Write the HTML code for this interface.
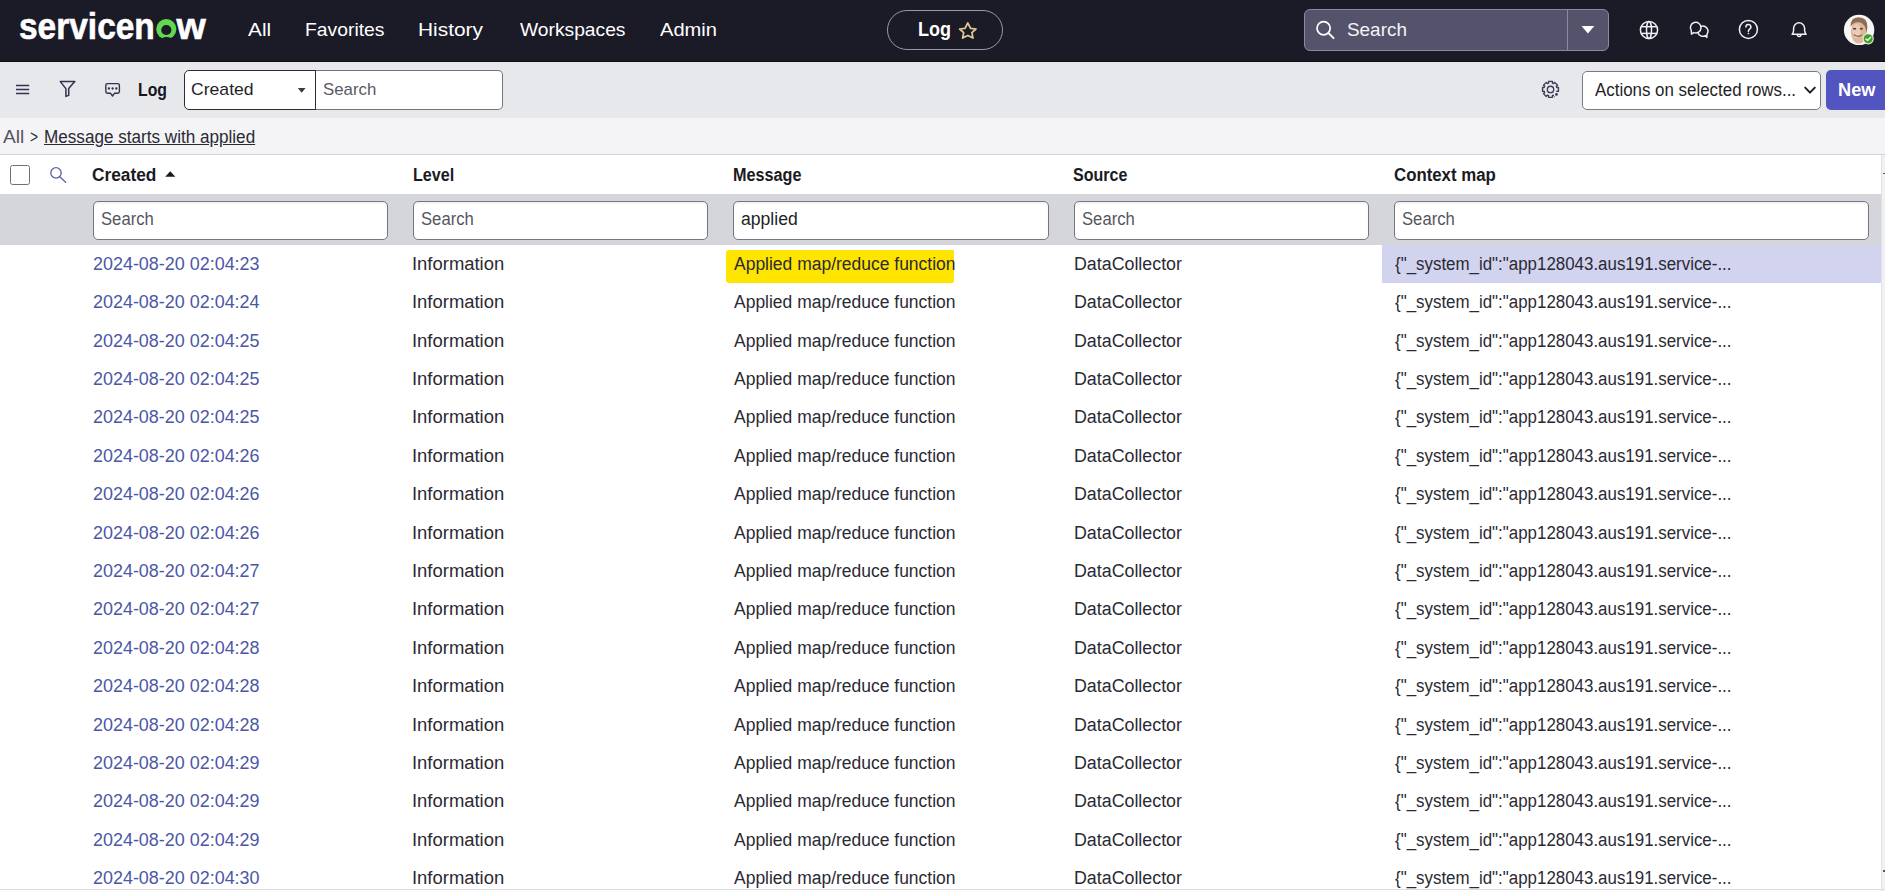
<!DOCTYPE html>
<html><head><meta charset="utf-8"><title>Log | ServiceNow</title>
<style>
html,body{margin:0;padding:0}
body{width:1885px;height:891px;overflow:hidden;position:relative;background:#fff;font-family:"Liberation Sans",sans-serif}
.r{position:absolute;box-sizing:border-box}
.t{position:absolute;white-space:pre;line-height:1;font-family:"Liberation Sans",sans-serif;transform-origin:0 0}
svg{position:absolute;overflow:visible}
</style></head><body>
<!-- nav -->
<div class="r" style="left:0;top:0;width:1885px;height:61px;background:#1b1a27"></div>
<div class="r" style="left:0;top:61px;width:1885px;height:1px;background:#0e0d16"></div>
<!-- toolbar -->
<div class="r" style="left:0;top:62px;width:1885px;height:56px;background:#e7e8ec"></div>
<!-- breadcrumb -->
<div class="r" style="left:0;top:118px;width:1885px;height:36px;background:#f4f4f7"></div>
<div class="r" style="left:0;top:154px;width:1885px;height:1px;background:#d4d4d8"></div>
<!-- filter row -->
<div class="r" style="left:0;top:194px;width:1881px;height:50.5px;background:#d5d6db"></div>
<!-- scrollbar track -->
<div class="r" style="left:1881px;top:155px;width:4px;height:736px;background:#f1f1f3;border-left:1px solid #e2e2e6"></div>
<div class="r" style="left:0;top:889px;width:1885px;height:1px;background:#dcdce0"></div>
<div class="r" style="left:1883px;top:172.5px;width:2px;height:1.6px;background:#555"></div>
<div class="r" style="left:1883px;top:870px;width:2px;height:1.6px;background:#555"></div>

<!-- logo -->
<svg style="left:0;top:0" width="240" height="62">
  <text x="19" y="38.6" font-family="Liberation Sans" font-weight="700" font-size="36" fill="#fff" stroke="#fff" stroke-width="0.6" textLength="135.8" lengthAdjust="spacingAndGlyphs">servicen</text>
  <circle cx="166.3" cy="29.1" r="10.1" fill="#62d84e"/>
  <circle cx="166.3" cy="30" r="5.1" fill="#1b1a27"/>
  <ellipse cx="166.6" cy="40.6" rx="6.4" ry="3.5" fill="#1b1a27"/>
  <text x="176.6" y="38.6" font-family="Liberation Sans" font-weight="700" font-size="36" fill="#fff" stroke="#fff" stroke-width="0.6" textLength="29.3" lengthAdjust="spacingAndGlyphs">w</text>
</svg>

<!-- Log pill -->
<div class="r" style="left:887px;top:10px;width:116px;height:40px;border:1.3px solid #9a98a8;border-radius:20px"></div>
<svg style="left:0;top:0" width="1" height="1">
  <path d="M967.8 23 L970.6 28.4 L976 29 L971.9 32.7 L973 38.1 L967.8 35.5 L962.6 38.1 L963.7 32.7 L959.6 29 L965 28.4 Z" fill="none" stroke="#e3cb94" stroke-width="1.7" stroke-linejoin="round"/>
</svg>

<!-- nav search -->
<div class="r" style="left:1304px;top:9px;width:305px;height:42px;background:#55526b;border:1.3px solid #8d8aa0;border-radius:6px"></div>
<div class="r" style="left:1567px;top:10px;width:1.2px;height:40px;background:#8d8aa0"></div>
<svg style="left:0;top:0" width="1" height="1">
  <circle cx="1323.6" cy="28.2" r="6.6" fill="none" stroke="#fff" stroke-width="1.7"/>
  <line x1="1328.4" y1="33" x2="1333.6" y2="38.2" stroke="#fff" stroke-width="1.8" stroke-linecap="round"/>
  <path d="M1581.5 26 L1594.3 26 L1587.9 33.6 Z" fill="#fff"/>
</svg>

<!-- nav icons -->
<svg style="left:0;top:0" width="1" height="1" fill="none" stroke="#f0f0f5" stroke-width="1.5">
  <!-- globe -->
  <circle cx="1649" cy="30" r="8.6"/>
  <ellipse cx="1649" cy="30" rx="2.5" ry="8.6"/>
  <line x1="1641.2" y1="26.7" x2="1656.8" y2="26.7"/>
  <line x1="1641.2" y1="33.4" x2="1656.8" y2="33.4"/>
  <!-- chats -->
  <path d="M1693.8 32.6 L1691.5 34.1 L1691.3 30.6 A5.3 5.3 0 1 1 1693.8 32.6 Z" stroke-linejoin="round"/>
  <path d="M1700.8 26.5 A5.1 5.1 0 0 1 1706.98 34.13 L1706.8 37.4 L1705.35 35.62 A5.1 5.1 0 0 1 1697.8 32.4" stroke-linejoin="round"/>
  <!-- help -->
  <circle cx="1748.4" cy="29.4" r="9"/>
  <path d="M1745.9 26.9 A2.5 2.5 0 1 1 1749.6 29.1 Q1748.4 29.9 1748.4 31.5" stroke-linecap="round" stroke-width="1.5"/>
  <circle cx="1748.4" cy="33.5" r="0.5" fill="#f0f0f5" stroke-width="0.7"/>
  <!-- bell -->
  <path d="M1792.1 34.2 L1806.1 34.2 Q1804.6 32.6 1804.6 30.2 L1804.6 28.3 A5.5 5.5 0 0 0 1793.6 28.3 L1793.6 30.2 Q1793.6 32.6 1792.1 34.2 Z" stroke-linejoin="round"/>
  <path d="M1797.3 34.6 A1.85 1.85 0 0 0 1801 34.6"/>
</svg>

<!-- avatar -->
<svg style="left:0;top:0" width="1" height="1">
  <defs><clipPath id="av"><circle cx="1859.1" cy="29.9" r="15.2"/></clipPath></defs>
  <circle cx="1859.1" cy="29.9" r="15.2" fill="#f7f6f5"/>
  <g clip-path="url(#av)">
    <ellipse cx="1858.8" cy="32" rx="7.9" ry="11.5" fill="#dfb79e"/>
    <ellipse cx="1856.5" cy="31" rx="4" ry="7" fill="#e9cbb6"/>
    <path d="M1850.6 27 Q1850 17.5 1858.5 17.2 Q1867.8 17.2 1867.4 27.5 L1866.5 33 Q1865.5 23.5 1859.5 22.2 Q1853 21.6 1850.6 27 Z" fill="#8f6d55"/>
    <ellipse cx="1854.6" cy="28.8" rx="1.7" ry="1" fill="#5e463a"/>
    <ellipse cx="1861.4" cy="28.8" rx="1.7" ry="1" fill="#5e463a"/>
    <path d="M1853.8 34.6 Q1858 37.8 1862 34.8" stroke="#9a5a48" stroke-width="1.3" fill="#f4ece6"/>
  </g>
  <circle cx="1868.2" cy="38.8" r="5.6" fill="#e4f3cf"/>
  <circle cx="1868.2" cy="38.8" r="4.5" fill="#3d9e2b"/>
  <path d="M1865.9 38.9 L1867.6 40.5 L1870.6 37.3" fill="none" stroke="#e8ffd8" stroke-width="1.4" stroke-linecap="round" stroke-linejoin="round"/>
</svg>

<!-- toolbar icons -->
<svg style="left:0;top:0" width="1" height="1" fill="none" stroke="#33334d" stroke-width="1.5">
  <line x1="16" y1="85.5" x2="29.2" y2="85.5"/>
  <line x1="16" y1="89.5" x2="29.2" y2="89.5"/>
  <line x1="16" y1="93.5" x2="29.2" y2="93.5"/>
  <path d="M60.3 81.6 L74.8 81.6 L68.7 88.6 L68.7 95.4 L65.9 96.4 L65.9 88.6 Z" stroke-linejoin="round"/>
  <path d="M107.5 83.6 L117.7 83.6 Q119.4 83.6 119.4 85.3 L119.4 91.6 Q119.4 93.3 117.7 93.3 L114.4 93.3 L112.5 96 L110.6 93.3 L107.5 93.3 Q105.8 93.3 105.8 91.6 L105.8 85.3 Q105.8 83.6 107.5 83.6 Z" stroke-linejoin="round" stroke-width="1.4"/>
  <circle cx="108.9" cy="88.5" r="1.15" fill="#2c2c45" stroke="none"/>
  <circle cx="112.6" cy="88.5" r="1.15" fill="#2c2c45" stroke="none"/>
  <circle cx="116.3" cy="88.5" r="1.15" fill="#2c2c45" stroke="none"/>
</svg>

<!-- toolbar select + search -->
<div class="r" style="left:184px;top:70px;width:132px;height:40px;background:#fff;border:1.3px solid #2d2d35;border-radius:5px 0 0 5px"></div>
<svg style="left:0;top:0" width="1" height="1"><path d="M297.8 88 L305.6 88 L301.7 92.8 Z" fill="#3a3a45"/></svg>
<div class="r" style="left:315px;top:70px;width:188px;height:40px;background:#fff;border:1.3px solid #74747c;border-left:none;border-radius:0 5px 5px 0"></div>
<div class="r" style="left:315px;top:70px;width:1.3px;height:40px;background:#2d2d35"></div>

<!-- gear -->
<svg style="left:0;top:0" width="1" height="1" fill="none" stroke="#3b3b55" stroke-width="1.35">
  <path d="M1548.63 83.07 L1548.52 81.44 L1552.48 81.44 L1552.37 83.07 L1553.65 83.60 L1554.72 82.37 L1557.53 85.18 L1556.30 86.25 L1556.83 87.53 L1558.46 87.42 L1558.46 91.38 L1556.83 91.27 L1556.30 92.55 L1557.53 93.62 L1554.72 96.43 L1553.65 95.20 L1552.37 95.73 L1552.48 97.36 L1548.52 97.36 L1548.63 95.73 L1547.35 95.20 L1546.28 96.43 L1543.47 93.62 L1544.70 92.55 L1544.17 91.27 L1542.54 91.38 L1542.54 87.42 L1544.17 87.53 L1544.70 86.25 L1543.47 85.18 L1546.28 82.37 L1547.35 83.60 Z" stroke-linejoin="round"/>
  <circle cx="1550.5" cy="89.4" r="3.2"/>
  <circle cx="1556.5" cy="94.4" r="2" fill="#2f3160" stroke="#e7e8ec" stroke-width="1.3"/>
</svg>

<!-- actions select -->
<div class="r" style="left:1581.5px;top:70.5px;width:239px;height:39px;background:#fff;border:1.3px solid #7a7a82;border-radius:5px"></div>
<svg style="left:0;top:0" width="1" height="1"><path d="M1805.2 87.6 L1810 92.6 L1814.8 87.6" fill="none" stroke="#1f1f27" stroke-width="2" stroke-linecap="round" stroke-linejoin="round"/></svg>
<!-- New button -->
<div class="r" style="left:1826px;top:70px;width:70px;height:40px;background:#5254bf;border-radius:5px"></div>

<!-- header row -->
<div class="r" style="left:10px;top:165px;width:20px;height:20px;border:1.4px solid #6f6f78;border-radius:2.5px;background:#fff"></div>
<svg style="left:0;top:0" width="1" height="1" fill="none" stroke="#5d62a8" stroke-width="1.3">
  <circle cx="56" cy="172.9" r="5.2"/>
  <line x1="59.8" y1="176.7" x2="65.6" y2="182.2" stroke-linecap="round"/>
</svg>
<svg style="left:0;top:0" width="1" height="1"><path d="M165.2 176.8 L175.3 176.8 L170.25 171.3 Z" fill="#1a1a22"/></svg>

<!-- filter inputs -->
<div class="r" style="left:93px;top:200.5px;width:295px;height:39.5px;background:#fff;border:1.4px solid #76767e;border-radius:5px;box-shadow:inset 0 2px 2px rgba(0,0,0,0.05)"></div>
<div class="r" style="left:413px;top:200.5px;width:295px;height:39.5px;background:#fff;border:1.4px solid #76767e;border-radius:5px;box-shadow:inset 0 2px 2px rgba(0,0,0,0.05)"></div>
<div class="r" style="left:733px;top:200.5px;width:316px;height:39.5px;background:#fff;border:1.4px solid #76767e;border-radius:5px;box-shadow:inset 0 2px 2px rgba(0,0,0,0.05)"></div>
<div class="r" style="left:1074px;top:200.5px;width:295px;height:39.5px;background:#fff;border:1.4px solid #76767e;border-radius:5px;box-shadow:inset 0 2px 2px rgba(0,0,0,0.05)"></div>
<div class="r" style="left:1394px;top:200.5px;width:475px;height:39.5px;background:#fff;border:1.4px solid #76767e;border-radius:5px;box-shadow:inset 0 2px 2px rgba(0,0,0,0.05)"></div>

<!-- row highlights -->
<div class="r" style="left:1382px;top:244.8px;width:499px;height:38px;background:#d2d3ee"></div>
<div class="r" style="left:725.7px;top:249.5px;width:228.6px;height:33px;background:#ffe400;border-radius:3px 1px 2px 3px"></div>
<div class="t" style="left:247.60px;top:19.81px;font-size:19px;font-weight:500;color:#ffffff;transform:scaleX(1.0950);">All</div>
<div class="t" style="left:304.58px;top:19.81px;font-size:19px;font-weight:500;color:#ffffff;transform:scaleX(1.0169);">Favorites</div>
<div class="t" style="left:418.20px;top:19.81px;font-size:19px;font-weight:500;color:#ffffff;transform:scaleX(1.0983);">History</div>
<div class="t" style="left:519.50px;top:19.81px;font-size:19px;font-weight:500;color:#ffffff;transform:scaleX(1.0125);">Workspaces</div>
<div class="t" style="left:660.40px;top:19.81px;font-size:19px;font-weight:500;color:#ffffff;transform:scaleX(1.0585);">Admin</div>
<div class="t" style="left:917.60px;top:19.07px;font-size:20px;font-weight:700;color:#ffffff;transform:scaleX(0.9000);">Log</div>
<div class="t" style="left:1346.81px;top:19.81px;font-size:19px;font-weight:400;color:#f4f4f8;transform:scaleX(0.9948);">Search</div>
<div class="t" style="left:137.57px;top:79.91px;font-size:19px;font-weight:700;color:#16161f;transform:scaleX(0.8303);">Log</div>
<div class="t" style="left:190.86px;top:81.31px;font-size:17px;font-weight:400;color:#1f1f27;transform:scaleX(1.0356);">Created</div>
<div class="t" style="left:322.91px;top:81.41px;font-size:17px;font-weight:400;color:#5a5a62;transform:scaleX(0.9885);">Search</div>
<div class="t" style="left:1594.60px;top:80.56px;font-size:18px;font-weight:400;color:#1f1f27;transform:scaleX(0.9390);">Actions on selected rows...</div>
<div class="t" style="left:1838.24px;top:79.61px;font-size:19px;font-weight:700;color:#ffffff;transform:scaleX(0.9579);">New</div>
<div class="t" style="left:2.90px;top:128.68px;font-size:17.5px;font-weight:400;color:#55555e;transform:scaleX(1.0944);">All</div>
<div class="t" style="left:29.61px;top:128.68px;font-size:17.5px;font-weight:400;color:#2a2a33;transform:scaleX(0.7889);">&gt;</div>
<div class="t" style="left:44.10px;top:128.68px;font-size:17.5px;font-weight:400;color:#2a2a33;transform:scaleX(0.9778);text-decoration:underline;text-underline-offset:1px;">Message starts with applied</div>
<div class="t" style="left:92.14px;top:165.66px;font-size:18px;font-weight:700;color:#1a1a22;transform:scaleX(0.9615);">Created</div>
<div class="t" style="left:412.70px;top:165.66px;font-size:18px;font-weight:700;color:#1a1a22;transform:scaleX(0.8955);">Level</div>
<div class="t" style="left:732.90px;top:165.66px;font-size:18px;font-weight:700;color:#1a1a22;transform:scaleX(0.9000);">Message</div>
<div class="t" style="left:1073.41px;top:165.66px;font-size:18px;font-weight:700;color:#1a1a22;transform:scaleX(0.8917);">Source</div>
<div class="t" style="left:1393.97px;top:165.66px;font-size:18px;font-weight:700;color:#1a1a22;transform:scaleX(0.9336);">Context map</div>
<div class="t" style="left:100.65px;top:211.08px;font-size:17.5px;font-weight:400;color:#56565e;transform:scaleX(0.9519);">Search</div>
<div class="t" style="left:420.65px;top:211.08px;font-size:17.5px;font-weight:400;color:#56565e;transform:scaleX(0.9519);">Search</div>
<div class="t" style="left:740.99px;top:211.08px;font-size:17.5px;font-weight:400;color:#1f1f27;transform:scaleX(1.0055);">applied</div>
<div class="t" style="left:1081.65px;top:211.08px;font-size:17.5px;font-weight:400;color:#56565e;transform:scaleX(0.9519);">Search</div>
<div class="t" style="left:1401.65px;top:211.08px;font-size:17.5px;font-weight:400;color:#56565e;transform:scaleX(0.9519);">Search</div>
<div class="t" style="left:92.50px;top:254.96px;font-size:18px;font-weight:400;color:#4b57a6;transform:scaleX(0.9964);">2024-08-20 02:04:23</div>
<div class="t" style="left:412.25px;top:254.96px;font-size:18px;font-weight:400;color:#2a2a33;transform:scaleX(1.0241);">Information</div>
<div class="t" style="left:733.60px;top:254.96px;font-size:18px;font-weight:400;color:#2a2a33;transform:scaleX(0.9709);">Applied map/reduce function</div>
<div class="t" style="left:1074.31px;top:254.96px;font-size:18px;font-weight:400;color:#2a2a33;transform:scaleX(0.9898);">DataCollector</div>
<div class="t" style="left:1394.50px;top:254.96px;font-size:18px;font-weight:400;color:#2a2a33;transform:scaleX(0.9389);">{"_system_id":"app128043.aus191.service-...</div>
<div class="t" style="left:92.50px;top:293.34px;font-size:18px;font-weight:400;color:#4b57a6;transform:scaleX(0.9964);">2024-08-20 02:04:24</div>
<div class="t" style="left:412.25px;top:293.34px;font-size:18px;font-weight:400;color:#2a2a33;transform:scaleX(1.0241);">Information</div>
<div class="t" style="left:733.60px;top:293.34px;font-size:18px;font-weight:400;color:#2a2a33;transform:scaleX(0.9709);">Applied map/reduce function</div>
<div class="t" style="left:1074.31px;top:293.34px;font-size:18px;font-weight:400;color:#2a2a33;transform:scaleX(0.9898);">DataCollector</div>
<div class="t" style="left:1394.50px;top:293.34px;font-size:18px;font-weight:400;color:#2a2a33;transform:scaleX(0.9389);">{"_system_id":"app128043.aus191.service-...</div>
<div class="t" style="left:92.50px;top:331.72px;font-size:18px;font-weight:400;color:#4b57a6;transform:scaleX(0.9964);">2024-08-20 02:04:25</div>
<div class="t" style="left:412.25px;top:331.72px;font-size:18px;font-weight:400;color:#2a2a33;transform:scaleX(1.0241);">Information</div>
<div class="t" style="left:733.60px;top:331.72px;font-size:18px;font-weight:400;color:#2a2a33;transform:scaleX(0.9709);">Applied map/reduce function</div>
<div class="t" style="left:1074.31px;top:331.72px;font-size:18px;font-weight:400;color:#2a2a33;transform:scaleX(0.9898);">DataCollector</div>
<div class="t" style="left:1394.50px;top:331.72px;font-size:18px;font-weight:400;color:#2a2a33;transform:scaleX(0.9389);">{"_system_id":"app128043.aus191.service-...</div>
<div class="t" style="left:92.50px;top:370.10px;font-size:18px;font-weight:400;color:#4b57a6;transform:scaleX(0.9964);">2024-08-20 02:04:25</div>
<div class="t" style="left:412.25px;top:370.10px;font-size:18px;font-weight:400;color:#2a2a33;transform:scaleX(1.0241);">Information</div>
<div class="t" style="left:733.60px;top:370.10px;font-size:18px;font-weight:400;color:#2a2a33;transform:scaleX(0.9709);">Applied map/reduce function</div>
<div class="t" style="left:1074.31px;top:370.10px;font-size:18px;font-weight:400;color:#2a2a33;transform:scaleX(0.9898);">DataCollector</div>
<div class="t" style="left:1394.50px;top:370.10px;font-size:18px;font-weight:400;color:#2a2a33;transform:scaleX(0.9389);">{"_system_id":"app128043.aus191.service-...</div>
<div class="t" style="left:92.50px;top:408.48px;font-size:18px;font-weight:400;color:#4b57a6;transform:scaleX(0.9964);">2024-08-20 02:04:25</div>
<div class="t" style="left:412.25px;top:408.48px;font-size:18px;font-weight:400;color:#2a2a33;transform:scaleX(1.0241);">Information</div>
<div class="t" style="left:733.60px;top:408.48px;font-size:18px;font-weight:400;color:#2a2a33;transform:scaleX(0.9709);">Applied map/reduce function</div>
<div class="t" style="left:1074.31px;top:408.48px;font-size:18px;font-weight:400;color:#2a2a33;transform:scaleX(0.9898);">DataCollector</div>
<div class="t" style="left:1394.50px;top:408.48px;font-size:18px;font-weight:400;color:#2a2a33;transform:scaleX(0.9389);">{"_system_id":"app128043.aus191.service-...</div>
<div class="t" style="left:92.50px;top:446.86px;font-size:18px;font-weight:400;color:#4b57a6;transform:scaleX(0.9964);">2024-08-20 02:04:26</div>
<div class="t" style="left:412.25px;top:446.86px;font-size:18px;font-weight:400;color:#2a2a33;transform:scaleX(1.0241);">Information</div>
<div class="t" style="left:733.60px;top:446.86px;font-size:18px;font-weight:400;color:#2a2a33;transform:scaleX(0.9709);">Applied map/reduce function</div>
<div class="t" style="left:1074.31px;top:446.86px;font-size:18px;font-weight:400;color:#2a2a33;transform:scaleX(0.9898);">DataCollector</div>
<div class="t" style="left:1394.50px;top:446.86px;font-size:18px;font-weight:400;color:#2a2a33;transform:scaleX(0.9389);">{"_system_id":"app128043.aus191.service-...</div>
<div class="t" style="left:92.50px;top:485.24px;font-size:18px;font-weight:400;color:#4b57a6;transform:scaleX(0.9964);">2024-08-20 02:04:26</div>
<div class="t" style="left:412.25px;top:485.24px;font-size:18px;font-weight:400;color:#2a2a33;transform:scaleX(1.0241);">Information</div>
<div class="t" style="left:733.60px;top:485.24px;font-size:18px;font-weight:400;color:#2a2a33;transform:scaleX(0.9709);">Applied map/reduce function</div>
<div class="t" style="left:1074.31px;top:485.24px;font-size:18px;font-weight:400;color:#2a2a33;transform:scaleX(0.9898);">DataCollector</div>
<div class="t" style="left:1394.50px;top:485.24px;font-size:18px;font-weight:400;color:#2a2a33;transform:scaleX(0.9389);">{"_system_id":"app128043.aus191.service-...</div>
<div class="t" style="left:92.50px;top:523.62px;font-size:18px;font-weight:400;color:#4b57a6;transform:scaleX(0.9964);">2024-08-20 02:04:26</div>
<div class="t" style="left:412.25px;top:523.62px;font-size:18px;font-weight:400;color:#2a2a33;transform:scaleX(1.0241);">Information</div>
<div class="t" style="left:733.60px;top:523.62px;font-size:18px;font-weight:400;color:#2a2a33;transform:scaleX(0.9709);">Applied map/reduce function</div>
<div class="t" style="left:1074.31px;top:523.62px;font-size:18px;font-weight:400;color:#2a2a33;transform:scaleX(0.9898);">DataCollector</div>
<div class="t" style="left:1394.50px;top:523.62px;font-size:18px;font-weight:400;color:#2a2a33;transform:scaleX(0.9389);">{"_system_id":"app128043.aus191.service-...</div>
<div class="t" style="left:92.50px;top:562.00px;font-size:18px;font-weight:400;color:#4b57a6;transform:scaleX(0.9964);">2024-08-20 02:04:27</div>
<div class="t" style="left:412.25px;top:562.00px;font-size:18px;font-weight:400;color:#2a2a33;transform:scaleX(1.0241);">Information</div>
<div class="t" style="left:733.60px;top:562.00px;font-size:18px;font-weight:400;color:#2a2a33;transform:scaleX(0.9709);">Applied map/reduce function</div>
<div class="t" style="left:1074.31px;top:562.00px;font-size:18px;font-weight:400;color:#2a2a33;transform:scaleX(0.9898);">DataCollector</div>
<div class="t" style="left:1394.50px;top:562.00px;font-size:18px;font-weight:400;color:#2a2a33;transform:scaleX(0.9389);">{"_system_id":"app128043.aus191.service-...</div>
<div class="t" style="left:92.50px;top:600.38px;font-size:18px;font-weight:400;color:#4b57a6;transform:scaleX(0.9964);">2024-08-20 02:04:27</div>
<div class="t" style="left:412.25px;top:600.38px;font-size:18px;font-weight:400;color:#2a2a33;transform:scaleX(1.0241);">Information</div>
<div class="t" style="left:733.60px;top:600.38px;font-size:18px;font-weight:400;color:#2a2a33;transform:scaleX(0.9709);">Applied map/reduce function</div>
<div class="t" style="left:1074.31px;top:600.38px;font-size:18px;font-weight:400;color:#2a2a33;transform:scaleX(0.9898);">DataCollector</div>
<div class="t" style="left:1394.50px;top:600.38px;font-size:18px;font-weight:400;color:#2a2a33;transform:scaleX(0.9389);">{"_system_id":"app128043.aus191.service-...</div>
<div class="t" style="left:92.50px;top:638.76px;font-size:18px;font-weight:400;color:#4b57a6;transform:scaleX(0.9964);">2024-08-20 02:04:28</div>
<div class="t" style="left:412.25px;top:638.76px;font-size:18px;font-weight:400;color:#2a2a33;transform:scaleX(1.0241);">Information</div>
<div class="t" style="left:733.60px;top:638.76px;font-size:18px;font-weight:400;color:#2a2a33;transform:scaleX(0.9709);">Applied map/reduce function</div>
<div class="t" style="left:1074.31px;top:638.76px;font-size:18px;font-weight:400;color:#2a2a33;transform:scaleX(0.9898);">DataCollector</div>
<div class="t" style="left:1394.50px;top:638.76px;font-size:18px;font-weight:400;color:#2a2a33;transform:scaleX(0.9389);">{"_system_id":"app128043.aus191.service-...</div>
<div class="t" style="left:92.50px;top:677.14px;font-size:18px;font-weight:400;color:#4b57a6;transform:scaleX(0.9964);">2024-08-20 02:04:28</div>
<div class="t" style="left:412.25px;top:677.14px;font-size:18px;font-weight:400;color:#2a2a33;transform:scaleX(1.0241);">Information</div>
<div class="t" style="left:733.60px;top:677.14px;font-size:18px;font-weight:400;color:#2a2a33;transform:scaleX(0.9709);">Applied map/reduce function</div>
<div class="t" style="left:1074.31px;top:677.14px;font-size:18px;font-weight:400;color:#2a2a33;transform:scaleX(0.9898);">DataCollector</div>
<div class="t" style="left:1394.50px;top:677.14px;font-size:18px;font-weight:400;color:#2a2a33;transform:scaleX(0.9389);">{"_system_id":"app128043.aus191.service-...</div>
<div class="t" style="left:92.50px;top:715.52px;font-size:18px;font-weight:400;color:#4b57a6;transform:scaleX(0.9964);">2024-08-20 02:04:28</div>
<div class="t" style="left:412.25px;top:715.52px;font-size:18px;font-weight:400;color:#2a2a33;transform:scaleX(1.0241);">Information</div>
<div class="t" style="left:733.60px;top:715.52px;font-size:18px;font-weight:400;color:#2a2a33;transform:scaleX(0.9709);">Applied map/reduce function</div>
<div class="t" style="left:1074.31px;top:715.52px;font-size:18px;font-weight:400;color:#2a2a33;transform:scaleX(0.9898);">DataCollector</div>
<div class="t" style="left:1394.50px;top:715.52px;font-size:18px;font-weight:400;color:#2a2a33;transform:scaleX(0.9389);">{"_system_id":"app128043.aus191.service-...</div>
<div class="t" style="left:92.50px;top:753.90px;font-size:18px;font-weight:400;color:#4b57a6;transform:scaleX(0.9964);">2024-08-20 02:04:29</div>
<div class="t" style="left:412.25px;top:753.90px;font-size:18px;font-weight:400;color:#2a2a33;transform:scaleX(1.0241);">Information</div>
<div class="t" style="left:733.60px;top:753.90px;font-size:18px;font-weight:400;color:#2a2a33;transform:scaleX(0.9709);">Applied map/reduce function</div>
<div class="t" style="left:1074.31px;top:753.90px;font-size:18px;font-weight:400;color:#2a2a33;transform:scaleX(0.9898);">DataCollector</div>
<div class="t" style="left:1394.50px;top:753.90px;font-size:18px;font-weight:400;color:#2a2a33;transform:scaleX(0.9389);">{"_system_id":"app128043.aus191.service-...</div>
<div class="t" style="left:92.50px;top:792.28px;font-size:18px;font-weight:400;color:#4b57a6;transform:scaleX(0.9964);">2024-08-20 02:04:29</div>
<div class="t" style="left:412.25px;top:792.28px;font-size:18px;font-weight:400;color:#2a2a33;transform:scaleX(1.0241);">Information</div>
<div class="t" style="left:733.60px;top:792.28px;font-size:18px;font-weight:400;color:#2a2a33;transform:scaleX(0.9709);">Applied map/reduce function</div>
<div class="t" style="left:1074.31px;top:792.28px;font-size:18px;font-weight:400;color:#2a2a33;transform:scaleX(0.9898);">DataCollector</div>
<div class="t" style="left:1394.50px;top:792.28px;font-size:18px;font-weight:400;color:#2a2a33;transform:scaleX(0.9389);">{"_system_id":"app128043.aus191.service-...</div>
<div class="t" style="left:92.50px;top:830.66px;font-size:18px;font-weight:400;color:#4b57a6;transform:scaleX(0.9964);">2024-08-20 02:04:29</div>
<div class="t" style="left:412.25px;top:830.66px;font-size:18px;font-weight:400;color:#2a2a33;transform:scaleX(1.0241);">Information</div>
<div class="t" style="left:733.60px;top:830.66px;font-size:18px;font-weight:400;color:#2a2a33;transform:scaleX(0.9709);">Applied map/reduce function</div>
<div class="t" style="left:1074.31px;top:830.66px;font-size:18px;font-weight:400;color:#2a2a33;transform:scaleX(0.9898);">DataCollector</div>
<div class="t" style="left:1394.50px;top:830.66px;font-size:18px;font-weight:400;color:#2a2a33;transform:scaleX(0.9389);">{"_system_id":"app128043.aus191.service-...</div>
<div class="t" style="left:92.50px;top:869.04px;font-size:18px;font-weight:400;color:#4b57a6;transform:scaleX(0.9964);">2024-08-20 02:04:30</div>
<div class="t" style="left:412.25px;top:869.04px;font-size:18px;font-weight:400;color:#2a2a33;transform:scaleX(1.0241);">Information</div>
<div class="t" style="left:733.60px;top:869.04px;font-size:18px;font-weight:400;color:#2a2a33;transform:scaleX(0.9709);">Applied map/reduce function</div>
<div class="t" style="left:1074.31px;top:869.04px;font-size:18px;font-weight:400;color:#2a2a33;transform:scaleX(0.9898);">DataCollector</div>
<div class="t" style="left:1394.50px;top:869.04px;font-size:18px;font-weight:400;color:#2a2a33;transform:scaleX(0.9389);">{"_system_id":"app128043.aus191.service-...</div>
</body></html>
